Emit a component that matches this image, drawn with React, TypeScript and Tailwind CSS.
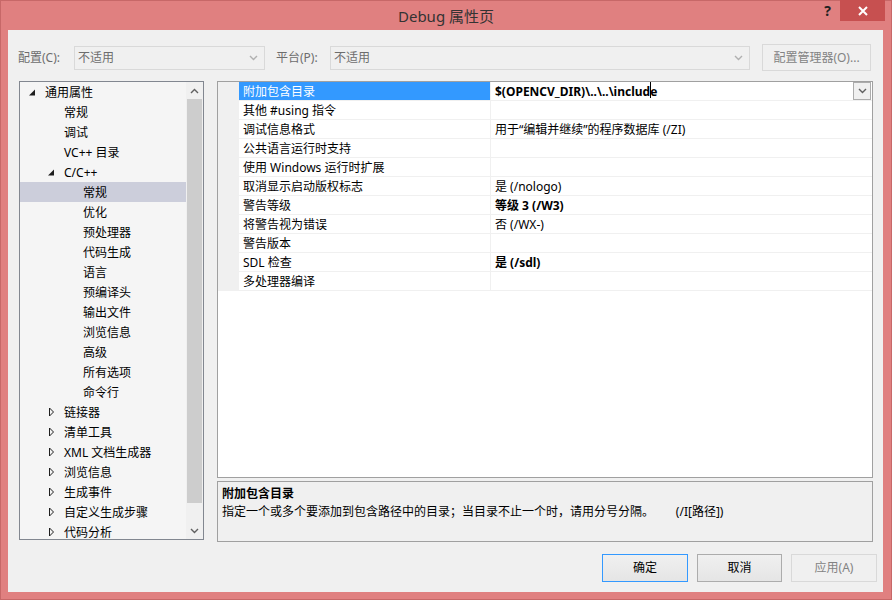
import React from "react";

type TreeItem = { label: string; level: number; state?: "open" | "closed"; selected?: boolean };

const treeItems: TreeItem[] = [
  { label: "通用属性", level: 0, state: "open" },
  { label: "常规", level: 1 },
  { label: "调试", level: 1 },
  { label: "VC++ 目录", level: 1 },
  { label: "C/C++", level: 1, state: "open" },
  { label: "常规", level: 2, selected: true },
  { label: "优化", level: 2 },
  { label: "预处理器", level: 2 },
  { label: "代码生成", level: 2 },
  { label: "语言", level: 2 },
  { label: "预编译头", level: 2 },
  { label: "输出文件", level: 2 },
  { label: "浏览信息", level: 2 },
  { label: "高级", level: 2 },
  { label: "所有选项", level: 2 },
  { label: "命令行", level: 2 },
  { label: "链接器", level: 1, state: "closed" },
  { label: "清单工具", level: 1, state: "closed" },
  { label: "XML 文档生成器", level: 1, state: "closed" },
  { label: "浏览信息", level: 1, state: "closed" },
  { label: "生成事件", level: 1, state: "closed" },
  { label: "自定义生成步骤", level: 1, state: "closed" },
  { label: "代码分析", level: 1, state: "closed" },
];

type Prop = { name: string; value?: string; bold?: boolean };

const props: Prop[] = [
  { name: "附加包含目录" },
  { name: "其他 #using 指令" },
  { name: "调试信息格式", value: "用于“编辑并继续”的程序数据库 (/ZI)" },
  { name: "公共语言运行时支持" },
  { name: "使用 Windows 运行时扩展" },
  { name: "取消显示启动版权标志", value: "是 (/nologo)" },
  { name: "警告等级", value: "等级 3 (/W3)", bold: true },
  { name: "将警告视为错误", value: "否 (/WX-)" },
  { name: "警告版本" },
  { name: "SDL 检查", value: "是 (/sdl)", bold: true },
  { name: "多处理器编译" },
];

const indentText = ["pl-[25px]", "pl-[44px]", "pl-[63px]"];
const indentArrow = ["left-[9px]", "left-[28px]", "left-[47px]"];

function Chevron({ className }: { className?: string }) {
  return (
    <svg width="9" height="6" viewBox="0 0 9 6" className={className}>
      <path d="M1 1l3.5 3.5L8 1" fill="none" stroke="currentColor" strokeWidth="1.4" />
    </svg>
  );
}

function Combo({ width, text }: { width: string; text: string }) {
  return (
    <div className={`${width} h-[24px] border border-[#d9d9d9] bg-[#f0f0f0] flex items-center pl-[3px] pr-[6px] text-[#6d6d6d]`}>
      <span className="flex-1">{text}</span>
      <Chevron className="text-[#b0b0b0]" />
    </div>
  );
}

function Tree() {
  return (
    <div className="w-[185px] h-[459px] border border-[#828790] bg-[#f5f5f5] flex">
      <div className="flex-1 overflow-hidden">
        {treeItems.map((it, i) => (
          <div
            key={i}
            className={`relative h-[20px] pt-px flex items-center ${indentText[it.level]} ${it.selected ? "bg-[#cccedb]" : ""}`}
          >
            {it.state === "open" && (
              <svg width="7" height="7" viewBox="0 0 7 7" className={`absolute top-[7px] ${indentArrow[it.level]}`}>
                <path d="M6 0.5V6.5H0Z" fill="#1e1e1e" />
              </svg>
            )}
            {it.state === "closed" && (
              <svg width="7" height="10" viewBox="0 0 7 10" className={`absolute top-[5px] ${indentArrow[it.level]}`}>
                <path d="M1.5 1L5.5 5L1.5 9Z" fill="none" stroke="#1e1e1e" strokeWidth="1" />
              </svg>
            )}
            <span>{it.label}</span>
          </div>
        ))}
      </div>
      <div className="w-[17px] bg-[#f0f0f0] flex flex-col items-center">
        <div className="h-[17px] flex items-center justify-center">
          <Chevron className="rotate-180 text-[#606060]" />
        </div>
        <div className="w-[15px] h-[404px] bg-[#cdcdcd]" />
        <div className="flex-1" />
        <div className="h-[17px] flex items-center justify-center">
          <Chevron className="text-[#606060]" />
        </div>
      </div>
    </div>
  );
}

function Grid() {
  return (
    <div className="h-[397px] border border-[#a0a0a0] bg-white">
      {props.map((p, i) => (
        <div key={i} className="h-[19px] flex border-b border-[#f0f0f0]">
          <div className="w-[21px] bg-[#f0f0f0]" />
          <div
            className={`w-[252px] pl-[4px] pt-px flex items-center border-r border-[#f0f0f0] ${i === 0 ? "bg-[#3399ff] text-white" : ""}`}
          >
            {p.name}
          </div>
          {i === 0 ? (
            <div className="flex-1 flex items-center pl-[4px]">
              <span className="flex-1 font-bold pt-px">
                $(OPENCV_DIR)\..\..\includ
                <span className="relative">
                  <span className="absolute left-0 top-[-1px] w-px h-[16px] bg-black" />e
                </span>
              </span>
              <div className="w-[18px] h-[18px] border border-[#acacac] bg-[#f0f0f0] flex items-center justify-center mr-px">
                <Chevron className="text-[#606060]" />
              </div>
            </div>
          ) : (
            <div className={`flex-1 pl-[4px] pt-px flex items-center ${p.bold ? "font-bold" : ""}`}>{p.value}</div>
          )}
        </div>
      ))}
    </div>
  );
}

function Btn({ label, kind }: { label: string; kind?: "default" | "disabled" }) {
  const border =
    kind === "default" ? "border-[#3399ff]" : kind === "disabled" ? "border-[#d9d9d9]" : "border-[#acacac]";
  const bg = kind === "disabled" ? "bg-[#f0f0f0] text-[#838383]" : "bg-gradient-to-b from-[#f0f0f0] to-[#e5e5e5] text-black";
  return (
    <div className={`h-[28px] flex items-center justify-center border ${border} ${bg}`}>{label}</div>
  );
}

export default function App() {
  return (
    <div className="w-[892px] h-[600px] bg-[#e08080] border border-[#c76868] flex flex-col text-[12px] text-black [font-family:'Noto_Sans','Noto_Sans_CJK_SC',sans-serif] leading-[16px] select-none">
      {/* title bar */}
      <div className="relative h-[29px] flex items-center justify-center">
        <span className="text-[15px] text-[#333] mt-[1px]">Debug 属性页</span>
        <span className="absolute right-[60px] top-[2px] text-[14px] font-bold text-[#222]">?</span>
        <div className="absolute right-[6px] top-[-1px] w-[45px] h-[21px] bg-[#c75050] flex items-center justify-center">
          <svg width="10" height="10" viewBox="0 0 10 10">
            <path d="M1 1l8 8M9 1l-8 8" stroke="white" strokeWidth="2" />
          </svg>
        </div>
      </div>

      {/* client */}
      <div className="ml-[7px] mr-[8px] mb-[7px] flex-1 bg-[#f0f0f0] flex flex-col">
        <div className="mt-[14px] h-[27px] flex items-center pl-[10px] text-[#6d6d6d]">
          <span className="w-[56px]">配置(C):</span>
          <Combo width="w-[191px]" text="不适用" />
          <span className="ml-[11px] w-[54px]">平台(P):</span>
          <Combo width="w-[420px]" text="不适用" />
          <div className="ml-[12px] w-[109px] h-[27px] border border-[#d9d9d9] flex items-center justify-center text-[#838383]">
            配置管理器(O)...
          </div>
        </div>

        <div className="mt-[10px] h-[461px] flex">
          <div className="ml-[11px]">
            <Tree />
          </div>
          <div className="ml-[13px] w-[656px] flex flex-col">
            <Grid />
            <div className="mt-[3px] h-[61px] border border-[#a0a0a0] bg-[#f0f0f0] pl-[4px] pt-[3px] leading-[18px]">
              <div className="font-bold">附加包含目录</div>
              <div className="whitespace-pre">指定一个或多个要添加到包含路径中的目录；当目录不止一个时，请用分号分隔。       (/I[路径])</div>
            </div>
          </div>
        </div>

        <div className="mt-[12px] flex justify-end gap-[9px] pr-[6px]">
          <div className="w-[86px]">
            <Btn label="确定" kind="default" />
          </div>
          <div className="w-[85px]">
            <Btn label="取消" />
          </div>
          <div className="w-[86px]">
            <Btn label="应用(A)" kind="disabled" />
          </div>
        </div>
      </div>
    </div>
  );
}
